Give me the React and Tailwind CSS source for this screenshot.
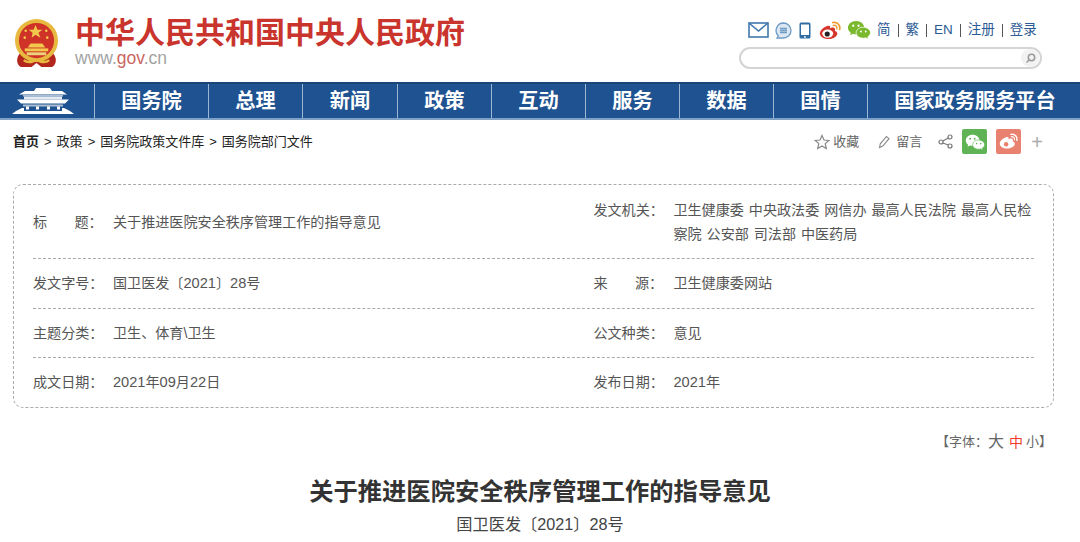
import React from 'react';

const FONT = { fontFamily: '"Liberation Sans", "Noto Sans CJK SC", sans-serif' };

const navItems = [
  { label: '国务院', w: 'w-[114px]' },
  { label: '总理', w: 'w-[94px]' },
  { label: '新闻', w: 'w-[95px]' },
  { label: '政策', w: 'w-[94px]' },
  { label: '互动', w: 'w-[94px]' },
  { label: '服务', w: 'w-[94px]' },
  { label: '数据', w: 'w-[94px]' },
  { label: '国情', w: 'w-[94px]' },
  { label: '国家政务服务平台', w: 'flex-1 pl-[2px]' },
];

const Emblem = () => (
  <svg width="45" height="49" viewBox="0 0 46 50">
    <path d="M7 34 C1 40 3 47 7 49 L18 49 L23 45 L28 49 L39 49 C43 47 45 40 39 34 Z" fill="#b3261e" />
    <circle cx="23" cy="22" r="22" fill="#e8b93f" />
    <circle cx="23" cy="22" r="18" fill="#cf3327" />
    <polygon points="22,6 24,11 29,11 25,14 27,19 22,16 18,19 19,14 15,11 20,11" fill="#f2c94c" />
    <circle cx="12" cy="12" r="1.3" fill="#f2c94c" />
    <circle cx="11" cy="19" r="1.3" fill="#f2c94c" />
    <circle cx="33" cy="12" r="1.3" fill="#f2c94c" />
    <circle cx="34" cy="19" r="1.3" fill="#f2c94c" />
    <path d="M14 29 L17 25 H29 L32 29 Z" fill="#f2c94c" />
    <rect x="11" y="30" width="24" height="3" fill="#f2c94c" />
    <rect x="13" y="34" width="20" height="3" fill="#ecd07a" />
    <path d="M10 42 C16 47 20 42 23 42 C26 42 30 47 36 42" fill="none" stroke="#e8b93f" strokeWidth="2.5" />
  </svg>
);

const Palace = () => (
  <svg width="62" height="26" viewBox="0 0 62 26" fill="#fff">
    <path d="M13 3 L22 3 L24 0 L38 0 L40 3 L50 3 L55 6.500 L7 6.500 Z" />
    <rect x="11" y="7" width="40" height="1.500" fill="#aebfd4" />
    <rect x="12" y="8.500" width="38" height="3" fill="#e6ecf4" />
    <path d="M5 11.500 H57 L53 15.500 H9 Z" />
    <rect x="11" y="16.500" width="40" height="2" fill="#aebfd4" />
    <path d="M14 18.500 h3 v3 h-3z M24 18.500 h3 v3 h-3z M35 18.500 h3 v3 h-3z M45 18.500 h3 v3 h-3z" />
    <path d="M4 23 L10 20 H12 V23 H50 V20 H52 L58 23 L62 26 H0 Z" />
  </svg>
);

const WechatGlyph = ({ size = 24, fill = '#7ab92d', eye = '#fff' }) => (
  <svg width={size} height={size * 0.8} viewBox="0 0 25 20">
    <path d="M9.500 1 C4.500 1 1 4.200 1 8 C1 10.200 2.200 12 4 13.300 L3.200 15.800 L6.200 14.300 C7.300 14.700 8.400 14.800 9.500 14.800 C14 14.800 18 11.800 18 8 C18 4.200 14.500 1 9.500 1 Z" fill={fill} />
    <path d="M17 7.500 C12.800 7.500 9.500 10.200 9.500 13.300 C9.500 16.500 12.800 19 17 19 C17.900 19 18.800 18.900 19.600 18.600 L22.500 20 L21.700 17.600 C23.300 16.500 24.500 15 24.500 13.300 C24.500 10.200 21.200 7.500 17 7.500 Z" fill={fill} stroke={eye} strokeWidth="0.8" />
    <circle cx="6.500" cy="6" r="1.200" fill={eye} />
    <circle cx="12" cy="6" r="1.200" fill={eye} />
    <circle cx="14.500" cy="12" r="1" fill={eye} />
    <circle cx="19.500" cy="12" r="1" fill={eye} />
  </svg>
);

const WeiboGlyph = ({ size = 22, body = '#d6362c', eye = '#fff', wave = '#ee9a2e' }) => (
  <svg width={size} height={size * 0.85} viewBox="0 0 24 20">
    <path d="M10 5 C4.500 6.500 0.500 10.500 1 14 C1.500 17.500 6 19.500 10.500 19.500 C16 19.500 20 16.500 20 13.500 C20 11.800 18.500 11 17.300 10.700 C18 8.700 17.500 7 15.500 6.800 C14.300 6.700 12.800 7.300 12 7.800 C12.500 5.500 11.800 4.500 10 5 Z" fill={body} />
    <ellipse cx="9.500" cy="13.500" rx="6" ry="4.500" fill={eye} />
    <circle cx="9" cy="14" r="2.800" fill={body === '#fff' ? '#e97f6c' : '#222'} />
    <path d="M15 1.500 C20 0.500 23.500 4.500 22.500 9" fill="none" stroke={wave} strokeWidth="1.800" strokeLinecap="round" />
    <path d="M15.500 4.500 C18 4 20 6 19.500 8.500" fill="none" stroke={wave} strokeWidth="1.500" strokeLinecap="round" />
  </svg>
);

const Sep = () => <span className="w-px h-[13px] bg-[#555] mx-[7px]" />;

const Num = ({ children }) => <span className="text-[14.6px]">{children}</span>;

const Field = ({ label, children, wide }) => (
  <div className={`flex ${wide ? 'w-[441px]' : 'w-[561px]'} leading-6`}>
    <span className="w-[80px] shrink-0 whitespace-pre">{label}</span>
    <span className="flex-1 [word-spacing:1px]">{children}</span>
  </div>
);

const rows = [
  {
    h: 'h-[74px]',
    left: ['标       题：', '关于推进医院安全秩序管理工作的指导意见'],
    right: ['发文机关：', '卫生健康委 中央政法委 网信办 最高人民法院 最高人民检察院 公安部 司法部 中医药局'],
  },
  {
    h: 'h-[50px] pb-[2px]',
    left: ['发文字号：', <>国卫医发〔<Num>2021</Num>〕<Num>28</Num>号</>],
    right: ['来       源：', '卫生健康委网站'],
  },
  { h: 'h-[49px]', left: ['主题分类：', '卫生、体育\\卫生'], right: ['公文种类：', '意见'] },
  {
    h: 'h-[49px] pb-[2px]',
    left: ['成文日期：', <><Num>2021</Num>年<Num>09</Num>月<Num>22</Num>日</>],
    right: ['发布日期：', <><Num>2021</Num>年</>],
  },
];

export default function App() {
  return (
    <div className="w-[1080px] h-[542px] overflow-hidden bg-white" style={FONT}>
      {/* top */}
      <div className="h-[82px] flex justify-between">
        <div className="flex pl-[14px] pt-[19px]">
          <Emblem />
          <div className="ml-[16px] -mt-[3px]">
            <div className="text-[30px] leading-[34px] font-bold text-[#c9342c] whitespace-nowrap">中华人民共和国中央人民政府</div>
            <div className="text-[17.500px] leading-[18px] -mt-[1px] text-[#a3a3a3]">
              www.<span className="text-[#c9665f]">gov</span>.cn
            </div>
          </div>
        </div>
        <div className="w-[341px] pt-[20px]">
          <div className="flex items-center h-[20px] pl-[9px] text-[13.500px] text-[#2c5a94]">
            <svg width="21" height="16" viewBox="0 0 21 16" className="mr-[6px]" fill="none" stroke="#3f78ad" strokeWidth="1.600">
              <rect x="1" y="1" width="19" height="14" />
              <path d="M1 1 L10.500 9 L20 1" />
            </svg>
            <svg width="17" height="17" viewBox="0 0 17 17" className="mr-[7px]" fill="#dbe7f2" stroke="#6f9cc4" strokeWidth="1.300">
              <path d="M8.500 1 A7.500 7.500 0 1 1 8.500 16 H2 L3.300 13.800 A7.500 7.500 0 0 1 8.500 1 Z" />
              <path d="M5 6.500 H12 M5 8.500 H12 M5 10.500 H12" />
            </svg>
            <svg width="12" height="17" viewBox="0 0 12 17" className="mr-[8px]">
              <rect x="0.500" y="0.500" width="11" height="16" rx="1.500" fill="#2f6da3" />
              <rect x="2" y="2.500" width="8" height="10.500" fill="#fff" />
              <circle cx="6" cy="15" r="0.900" fill="#fff" />
            </svg>
            <WeiboGlyph size={22} />
            <span className="ml-[6px]"><WechatGlyph size={24} /></span>
            <span className="ml-[6px]">简</span>
            <Sep />
            <span>繁</span>
            <Sep />
            <span>EN</span>
            <Sep />
            <span>注册</span>
            <Sep />
            <span>登录</span>
          </div>
          <div className="mt-[7px] w-[303px] h-[22px] rounded-full border-2 border-[#d4d4d4] bg-white flex justify-end items-center pr-[1px]">
            <span className="w-[18px] h-[18px] rounded-full bg-[#f2f2f2] flex items-center justify-center">
              <svg width="11" height="11" viewBox="0 0 11 11" fill="none" stroke="#999" strokeWidth="1.500">
                <circle cx="6.500" cy="4.500" r="3.200" />
                <path d="M4 7 L1.500 9.500" />
              </svg>
            </span>
          </div>
        </div>
      </div>

      {/* nav */}
      <nav className="h-[38px] flex bg-[#1f5290] border-t-2 border-t-[#1a4677] border-b-2 border-b-[#7fa2c6] text-white">
        <div className="w-[94px] flex items-center justify-center pr-[8px]">
          <Palace />
        </div>
        {navItems.map((item) => (
          <div key={item.label} className={`${item.w} border-l border-l-[#9db6d2] flex items-center justify-center text-[20.200px] font-bold whitespace-nowrap`}>
            {item.label}
          </div>
        ))}
      </nav>

      {/* breadcrumb + share */}
      <div className="h-[45px] flex items-center justify-between pl-[13px] pr-[37px] -mt-[1px]">
        <div className="text-[13px] text-[#222] flex gap-[5px] whitespace-nowrap">
          <span className="font-bold">首页</span><span>&gt;</span>
          <span>政策</span><span>&gt;</span>
          <span>国务院政策文件库</span><span>&gt;</span>
          <span>国务院部门文件</span>
        </div>
        <div className="flex items-center text-[13px] text-[#666]">
          <svg width="16" height="16" viewBox="0 0 16 16" fill="none" stroke="#888" strokeWidth="1.200" className="mr-[3px]">
            <polygon points="8,1.500 10,6 14.800,6.400 11.200,9.600 12.300,14.500 8,11.900 3.700,14.500 4.800,9.600 1.200,6.400 6,6" />
          </svg>
          <span>收藏</span>
          <svg width="13" height="14" viewBox="0 0 13 14" fill="none" stroke="#888" strokeWidth="1.100" className="ml-[19px] mr-[5px]">
            <path d="M1.500 12.500 L2.300 8.800 L8.500 1.500 L11 3.700 L4.800 11 Z" />
          </svg>
          <span>留言</span>
          <svg width="15" height="15" viewBox="0 0 15 15" fill="none" stroke="#777" strokeWidth="1.200" className="ml-[16px]">
            <circle cx="3" cy="8" r="2" />
            <circle cx="12" cy="3" r="2" />
            <circle cx="12" cy="12" r="2" />
            <path d="M4.800 7 L10.300 4 M4.800 9 L10.300 11" />
          </svg>
          <span className="ml-[9px] w-[25px] h-[25px] rounded-[2px] bg-[#5fb354] flex items-center justify-center">
            <WechatGlyph size={20} fill="#fff" eye="#5fb354" />
          </span>
          <span className="ml-[9px] w-[25px] h-[25px] rounded-[2px] bg-[#e98170] flex items-center justify-center">
            <WeiboGlyph size={19} body="#fff" eye="#fff" wave="#fff" />
          </span>
          <span className="ml-[10px] text-[20px] leading-none text-[#aaa]">+</span>
        </div>
      </div>

      {/* info card */}
      <div className="mt-[20px] ml-[13px] w-[1041px] h-[224px] rounded-[10px] border border-dashed border-[#aaa] px-[19px] text-[14.100px] text-[#555]">
        {rows.map((r, i) => (
          <div key={i} className={`${r.h} flex items-center ${i < 3 ? 'border-b border-dashed border-b-[#aaa]' : ''}`}>
            <Field label={r.left[0]}>{r.left[1]}</Field>
            <Field label={r.right[0]} wide>{r.right[1]}</Field>
          </div>
        ))}
      </div>

      {/* font size */}
      <div className="mt-[22px] pr-[28px] flex justify-end items-center h-[24px] text-[13px] text-[#666]">
        <span>【字体：</span>
        <span className="text-[16px]">大</span>
        <span className="text-[14px] ml-[5px] text-[#f03a2e]">中</span>
        <span className="ml-[3px]">小</span>
        <span>】</span>
      </div>

      {/* title */}
      <h1 className="mt-[20px] text-center text-[24.300px] leading-[36px] font-bold text-[#333]">关于推进医院安全秩序管理工作的指导意见</h1>
      <p className="mt-[2px] text-center text-[16.200px] leading-[24px] text-[#444]">国卫医发〔2021〕28号</p>
    </div>
  );
}
